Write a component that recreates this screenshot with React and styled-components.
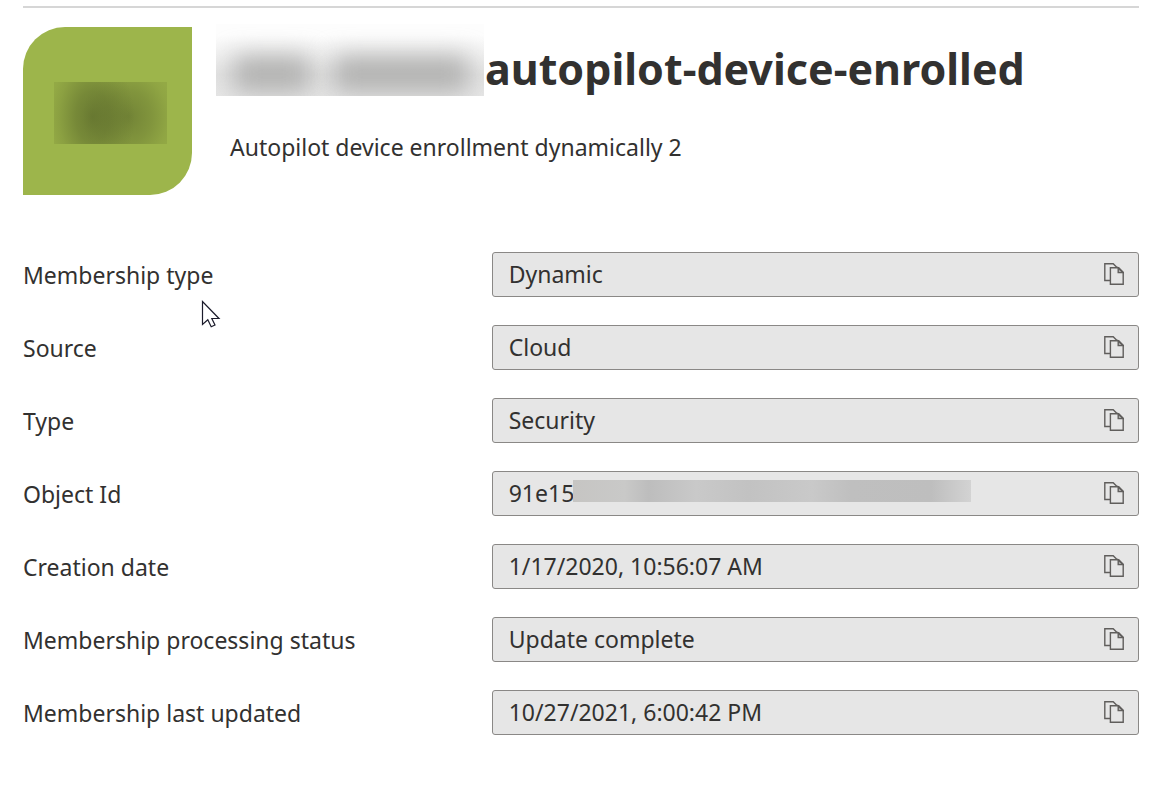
import styled, { createGlobalStyle } from "styled-components";

const fields = [
  { id: "membership-type", label: "Membership type", value: "Dynamic" },
  { id: "source", label: "Source", value: "Cloud" },
  { id: "type", label: "Type", value: "Security" },
  { id: "object-id", label: "Object Id", value: "91e15", masked: true },
  {
    id: "creation-date",
    label: "Creation date",
    value: "1/17/2020, 10:56:07 AM",
  },
  {
    id: "processing-status",
    label: "Membership processing status",
    value: "Update complete",
  },
  {
    id: "last-updated",
    label: "Membership last updated",
    value: "10/27/2021, 6:00:42 PM",
  },
];

function CopyIcon() {
  return (
    <StyledCopyIcon viewBox="0 0 20 22" aria-hidden="true">
      <path d="M6 17.5H0.8V0.7H9.2L13 4.6" />
      <path d="M6.4 4.7H14.7L19.2 9.3V21.2H6.4Z" />
      <path d="M14.2 5V9.6H19Z" fill="currentColor" fillOpacity="0.4" />
    </StyledCopyIcon>
  );
}

function Field({ id, label, value, masked }) {
  return (
    <FieldRow>
      <FieldLabel htmlFor={id}>{label}</FieldLabel>
      <FieldBox>
        <FieldInput id={id} value={value} masked={masked} readOnly />
        {masked && <ValueMask />}
        <CopyButton type="button" aria-label={`Copy ${label}`}>
          <CopyIcon />
        </CopyButton>
      </FieldBox>
    </FieldRow>
  );
}

export default function App() {
  return (
    <>
      <GlobalStyle />
      <Page>
        <Header>
          <Avatar>
            <AvatarMask />
          </Avatar>
          <HeaderText>
            <TitleRow>
              <TitleMask />
              <Title>autopilot-device-enrolled</Title>
            </TitleRow>
            <Description>Autopilot device enrollment dynamically 2</Description>
          </HeaderText>
        </Header>
        <FieldList>
          {fields.map((field) => (
            <Field key={field.id} {...field} />
          ))}
        </FieldList>
        <Pointer viewBox="0 0 20 28" aria-hidden="true">
          <path d="M1.5 1.5V24.5L6.8 19.8L10.2 26.8L14 25L10.8 18.5H18Z" />
        </Pointer>
      </Page>
    </>
  );
}

const GlobalStyle = createGlobalStyle`
  * {
    box-sizing: border-box;
  }

  body {
    margin: 0;
    background-color: #fff;
    color: #323130;
    font-family: "Segoe UI", "Noto Sans", "Open Sans", sans-serif;
    font-size: 23px;
    line-height: 32px;
  }
`;

const Page = styled.main`
  position: relative;
  margin: 6px 20px 0 23px;
  border-top: 2px solid #d6d6d6;
`;

const Header = styled.header`
  display: flex;
  gap: 24px;
  padding-top: 16px;
`;

const Avatar = styled.div`
  flex: none;
  width: 169px;
  height: 168px;
  margin-top: 3px;
  padding: 55px 25px 51px 31px;
  border-radius: 42px 0;
  background-color: #9db54b;
`;

const AvatarMask = styled.div`
  height: 62px;
  background: radial-gradient(
      ellipse 42px 64px at 34% 56%,
      rgba(84, 98, 40, 0.65),
      rgba(84, 98, 40, 0.45) 40%,
      rgba(84, 98, 40, 0.12) 80%,
      transparent
    ),
    radial-gradient(
      ellipse 46px 52px at 66% 56%,
      rgba(88, 102, 42, 0.55),
      rgba(88, 102, 42, 0.3) 50%,
      rgba(88, 102, 42, 0.06) 85%,
      transparent
    ),
    #93a945;
`;

const HeaderText = styled.div`
  min-width: 0;
`;

const TitleRow = styled.div`
  display: flex;
  align-items: flex-end;
`;

const TitleMask = styled.div`
  position: relative;
  flex: none;
  width: 268px;
  height: 72px;
  overflow: hidden;
  background: linear-gradient(#fdfdfd 15%, #efefef 45%, #e2e2e2 70%, #e6e6e6);

  &::before,
  &::after {
    content: "";
    position: absolute;
    top: 32px;
    height: 36px;
    background-color: #b2b2b1;
    filter: blur(12px);
  }

  &::before {
    left: 18px;
    width: 76px;
  }

  &::after {
    left: 118px;
    width: 134px;
  }
`;

const Title = styled.h1`
  margin: 0;
  padding-left: 1px;
  font-size: 43px;
  line-height: 54px;
  font-weight: 700;
  white-space: nowrap;
`;

const Description = styled.p`
  margin: 35px 0 0 14px;
`;

const FieldList = styled.div`
  display: flex;
  flex-direction: column;
  gap: 28px;
  margin-top: 57px;
`;

const FieldRow = styled.div`
  display: grid;
  grid-template-columns: 42% 1fr;
  align-items: center;
`;

const FieldLabel = styled.label`
  justify-self: start;
`;

const FieldBox = styled.div`
  display: flex;
  align-items: center;
  height: 45px;
  padding: 0 10px 0 16px;
  border: 1px solid #8a8886;
  border-radius: 3px;
  background-color: #e6e6e6;
`;

const FieldInput = styled.input.withConfig({
  shouldForwardProp: (prop) => prop !== "masked",
})`
  flex: ${(props) => (props.masked ? "0 0 64px" : "1")};
  min-width: 0;
  height: 32px;
  margin-bottom: 1px;
  padding: 0;
  border: none;
  outline: none;
  background: transparent;
  color: inherit;
  font: inherit;
`;

const ValueMask = styled.div`
  flex: 0 1 398px;
  height: 22px;
  margin-bottom: 6px;
  background: linear-gradient(
    90deg,
    #c6c5c3,
    #c9c9c8 13%,
    #bdbdbd 19%,
    #c9c9c9 31%,
    #c2c2c2 44%,
    #c9c9c9 60%,
    #bfbfbf 70%,
    #bebebe 90%,
    #d3d3d3
  );
`;

const CopyButton = styled.button`
  flex: none;
  display: flex;
  margin-left: auto;
  padding: 4px 4px 5px;
  border: none;
  background: transparent;
  color: #605e5c;
  cursor: pointer;
`;

const StyledCopyIcon = styled.svg`
  width: 20px;
  height: 22px;
  fill: none;
  stroke: currentColor;
  stroke-width: 1.4;
`;

const Pointer = styled.svg`
  position: absolute;
  top: 292px;
  left: 178px;
  width: 20px;
  height: 28px;
  fill: #fff;
  stroke: #1b1b2b;
  stroke-width: 1.2;
  pointer-events: none;
`;
